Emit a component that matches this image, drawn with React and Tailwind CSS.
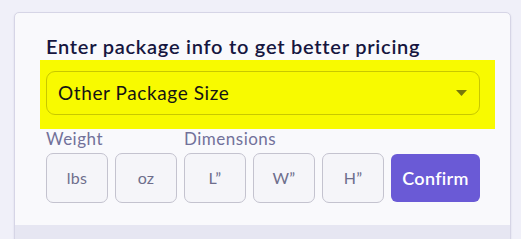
export default function App() {
  const btn =
    "w-[62px] h-[50px] rounded-[7px] border-[1.5px] border-[#c4c3cf] bg-[#f5f5f9] text-[16px] tracking-[0.3px] text-[#6e6e8c] flex items-center justify-center";
  return (
    <div className="w-[521px] h-[239px] bg-[#f0f0f9] overflow-hidden pt-[12px] pl-[14px] pr-[10px]" style={{ fontFamily: "Lato, 'Noto Sans', sans-serif" }}>
      <div className="rounded-[5px] border border-[#d6d5e6] bg-[#f9f9fc] shadow-[0_1px_2px_rgba(60,60,120,0.12)] overflow-hidden">
        <div className="pt-[20px] pb-[22px] pl-[31px] pr-[30px]">
          <div className="text-[20px] leading-[27px] font-semibold tracking-[0.75px] text-[#16163f]">
            Enter package info to get better pricing
          </div>
          <div className="-ml-[6px] -mr-[15px] pt-[11px] pb-[14px] pl-[6px] pr-[15px] bg-[#f8fa00]">
            <div className="h-[44px] rounded-[9px] border border-[#c8c800] flex items-center justify-between pl-[11px] pr-[12px]">
              <span className="text-[19px] tracking-[0.6px] text-[#141414]">Other Package Size</span>
              <svg width="11" height="6" viewBox="0 0 11 6"><path d="M0 0H11L5.5 6Z" fill="#77770a" /></svg>
            </div>
          </div>
          <div className="flex gap-[7px]">
            <div>
              <div className="text-[17px] leading-[20px] tracking-[0.5px] text-[#72719a] mb-[4px]">Weight</div>
              <div className="flex gap-[7px]">
                <div className={btn}>lbs</div>
                <div className={btn}>oz</div>
              </div>
            </div>
            <div>
              <div className="text-[17px] leading-[20px] tracking-[0.5px] text-[#72719a] mb-[4px]">Dimensions</div>
              <div className="flex gap-[7px]">
                <div className={btn}>L”</div>
                <div className={btn}>W”</div>
                <div className={btn}>H”</div>
              </div>
            </div>
            <div className="flex-1 flex items-end">
              <div className="w-full h-[48px] mb-[1px] rounded-[6px] bg-[#6a5ad6] text-white text-[18px] font-semibold tracking-[0.3px] flex items-center justify-center">
                Confirm
              </div>
            </div>
          </div>
        </div>
        <div className="h-[20px] bg-[#e6e6f2]" />
      </div>
    </div>
  );
}
